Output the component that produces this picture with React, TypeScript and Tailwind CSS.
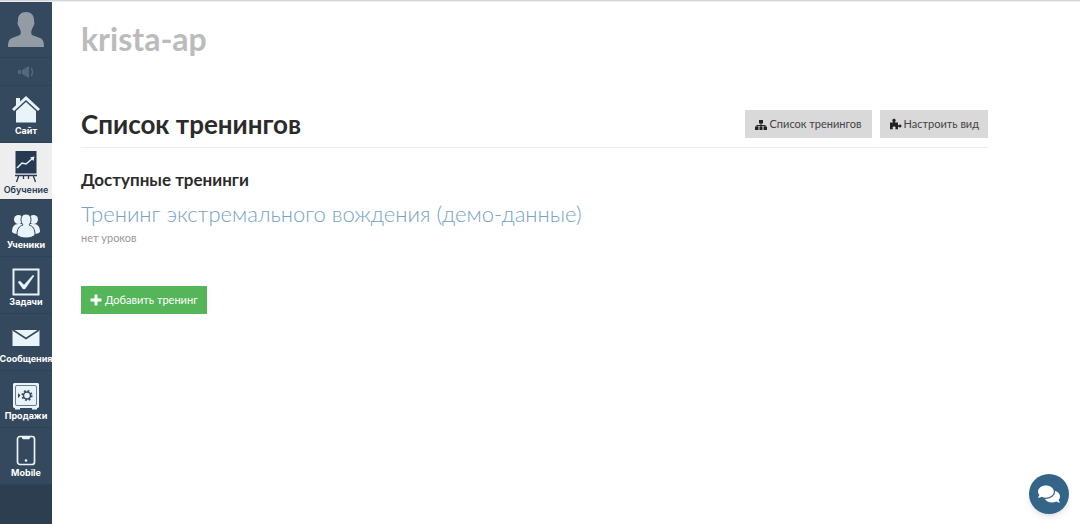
import type { ReactNode } from "react";
import { FaComments } from "react-icons/fa";

function HomeIcon() {
  return (
    <svg viewBox="0 0 30 30" className="size-[30px]" fill="#e9f3fa" aria-hidden="true">
      <path d="M5 3h4v5l-4 4z" />
      <path d="M15 1 29 14l-2 2L15 5 3 16l-2-2z" />
      <path d="M15 7 25 16v11.500H5V16z" />
    </svg>
  );
}

function BoardIcon() {
  return (
    <svg viewBox="0 0 30 34" className="h-[34px] w-[30px]" fill="none" aria-hidden="true">
      <path d="M4.500 1h21v22.500h-21z" fill="#263b52" />
      <path d="M4 25.500h22M8 25l-2.500 7M22 25l2.500 7M12.500 25v4M17.500 25v4" stroke="#263b52" strokeWidth="1.300" />
      <path d="m6 18 5-5 4 1 7-6" stroke="#e9f3fa" strokeWidth="1.500" />
      <path d="m19 7.500 4.500-1-1 4.500z" fill="#e9f3fa" />
    </svg>
  );
}

function PeopleIcon() {
  return (
    <svg viewBox="0 0 30 26" className="h-[26px] w-[30px]" fill="#e9f3fa" aria-hidden="true">
      <circle cx="7.500" cy="6.500" r="4.500" />
      <circle cx="22.500" cy="6.500" r="4.500" />
      <path d="M1 19c0-5 2-8 6-8h16c4 0 6 3 6 8-2 2-5 2-7 2H8c-2 0-5 0-7-2z" />
      <path
        d="M15 1c3 0 5 2 5 5.500 0 2.500-1 4.500-2 5.500 4 1 6 4 6 10-2 2-5 3-9 3s-7-1-9-3c0-6 2-9 6-10-1-1-2-3-2-5.500C10 3 12 1 15 1z"
        stroke="#34495e"
      />
    </svg>
  );
}

function TaskIcon() {
  return (
    <svg viewBox="0 0 28 28" className="size-7" fill="none" stroke="#e9f3fa" aria-hidden="true">
      <path d="M1.500 1.500h25v25h-25z" strokeWidth="2" />
      <path d="m6 14 2-1 4 4 9-10 1 1-9 13h-2z" fill="#e9f3fa" strokeWidth=".3" />
    </svg>
  );
}

function MailIcon() {
  return (
    <svg viewBox="0 0 28 18" className="h-[18px] w-7" aria-hidden="true">
      <path d="M.5 1h27v16H.5z" fill="#e9f3fa" />
      <path d="m1 1 13 8.500L27 1" fill="none" stroke="#34495e" strokeWidth="1.500" />
    </svg>
  );
}

function SafeIcon() {
  return (
    <svg viewBox="0 0 28 28" className="size-7" aria-hidden="true">
      <path d="M2 1h24l1 1v23l-1 1h-1v1.500h-5V26H8v1.500H3V26H2l-1-1V2z" fill="#e9f3fa" />
      <rect x="3.500" y="3.500" width="21" height="20" rx="1.500" fill="none" stroke="#34495e" strokeWidth=".7" />
      <circle cx="15" cy="13.500" r="3.500" fill="none" stroke="#34495e" strokeWidth="1.500" />
      <circle cx="15" cy="13.500" r="4.700" fill="none" stroke="#34495e" strokeWidth="1.800" strokeDasharray="1.800 1.890" />
      <path d="M6 11v5l2.500-2.500z" fill="#34495e" />
    </svg>
  );
}

function PhoneIcon() {
  return (
    <svg viewBox="0 0 20 32" className="h-8 w-5" fill="none" stroke="#e9f3fa" aria-hidden="true">
      <rect x="1.500" y="1.500" width="17" height="28" rx="2.500" strokeWidth="1.700" />
      <path d="M6 2h8v1l-1 1H7L6 3z" fill="#e9f3fa" strokeWidth=".5" />
      <circle cx="10" cy="25.500" r="1.300" fill="#e9f3fa" stroke="none" />
    </svg>
  );
}

function SitemapIcon() {
  return (
    <svg viewBox="0 0 12 11" className="h-[11px] w-3" fill="#222222" aria-hidden="true">
      <path d="M4 1h4v3.500H6.500V6h4v1.500H12V11H8.500V7.500h1V7h-3v.5h1V11h-3V7.500h1V7h-3v.5h1V11H0V7.500h1.500V6h4V4.500H4z" />
    </svg>
  );
}

function PuzzleIcon() {
  return (
    <svg viewBox="0 0 13 12" className="h-3 w-[13px]" fill="#222222" aria-hidden="true">
      <path d="M1 4.500h3.200C4 3.800 3.300 3.200 3.300 2.300 3.300 1.300 4.100.7 5 .7s1.700.6 1.700 1.600c0 .9-.7 1.500-.9 2.200H9v2.700c.8 0 1.200-.8 2-.8s1.500.6 1.500 1.500S11.900 9.400 11 9.400s-1.200-.7-2-.7v2.600H6.300c-.2-.6.3-1 .3-1.600 0-.8-.7-1.300-1.500-1.300s-1.500.5-1.500 1.300c0 .6.5 1 .3 1.600H1z" />
    </svg>
  );
}

function PlusIcon() {
  return (
    <svg viewBox="0 0 12 12" className="size-3" fill="#ffffff" aria-hidden="true">
      <path d="M4.500.5h3v4h4v3h-4v4h-3v-4h-4v-3h4z" />
    </svg>
  );
}

type Item = { label: string; icon: ReactNode; active?: boolean };

const items: Item[] = [
  { label: "Сайт", icon: <HomeIcon /> },
  { label: "Обучение", icon: <BoardIcon />, active: true },
  { label: "Ученики", icon: <PeopleIcon /> },
  { label: "Задачи", icon: <TaskIcon /> },
  { label: "Сообщения", icon: <MailIcon /> },
  { label: "Продажи", icon: <SafeIcon /> },
  { label: "Mobile", icon: <PhoneIcon /> },
];

function Sidebar() {
  return (
    <nav className="flex w-[52px] shrink-0 flex-col bg-[#2c3e50]">
      <a href="#profile" aria-label="Профиль" className="flex h-14 items-center justify-center border-b border-[#2d4257] bg-[#34495e]">
        <svg viewBox="0 0 36 36" className="size-9" fill="#939ca5" aria-hidden="true">
          <path d="M18 0c5 0 8 3 8 8 0 2 1 2 0 5l-2 4c-1 2-1 5 0 6l8 3c3 1 4 4 4 9H0c0-5 1-8 4-9l8-3c1-1 1-4 0-6l-2-4c-1-3 0-3 0-5 0-5 3-8 8-8z" />
        </svg>
      </a>
      <a href="#news" aria-label="Новости" className="flex h-7 items-center justify-center border-b border-[#2d4257] bg-[#34495e]">
        <svg viewBox="0 0 18 14" className="h-3.5 w-[18px]" fill="#52687d" aria-hidden="true">
          <path d="M1 5h3v4H1zM5 5l7-4v12L5 9z" />
          <path d="M14 3c2 2 2 6 0 8" fill="none" stroke="#52687d" strokeWidth="1.500" />
        </svg>
      </a>
      {items.map(({ label, icon, active }) => (
        <a
          key={label}
          href={`#${label}`}
          className={
            active
              ? "flex h-[57px] flex-col items-center justify-end border-b border-[#2d4257] bg-[#eeeeee] pb-[3px] text-[9px] leading-3 font-semibold text-[#263b52]"
              : "flex h-[57px] flex-col items-center justify-end border-b border-[#2d4257] bg-[#34495e] pb-[5px] text-[9px] leading-3 font-bold text-white"
          }
        >
          <span className={label === "Сообщения" ? "mb-1.5" : ""}>{icon}</span>
          <span>{label}</span>
        </a>
      ))}
    </nav>
  );
}

export default function App() {
  return (
    <div className="flex min-h-screen flex-col bg-white font-['Inter',sans-serif] text-[#2b2b2b]">
      <div className="h-0.5 shrink-0 border-t border-[#d5d5d5] bg-[#eeeeee]" />
      <div className="flex grow">
        <Sidebar />
        <main className="grow pr-[92px] pl-[29px] font-['Lato',sans-serif]">
          <p className="pt-[17px] text-[32px] leading-10 font-bold text-[#bbbbbb]">krista-ap</p>
          <header className="mt-[45px] flex items-center justify-between border-b border-[#eeeeee] pb-[3px]">
            <h1 className="text-[26px] leading-10 font-bold">Список тренингов</h1>
            <div className="flex gap-2 text-[11px] text-[#444444]">
              <button type="button" className="flex h-7 items-center gap-[3px] bg-[#d9d9d9] px-2.5">
                <SitemapIcon />
                Список тренингов
              </button>
              <button type="button" className="flex h-7 items-center gap-0.5 bg-[#d9d9d9] px-[9px]">
                <PuzzleIcon />
                Настроить вид
              </button>
            </div>
          </header>
          <h2 className="mt-5 text-[17px] leading-6 font-bold">Доступные тренинги</h2>
          <a href="#training" className="mt-1.5 block text-[22px] leading-8 font-light text-[#76a3c6]">
            Тренинг экстремального вождения (демо-данные)
          </a>
          <p className="text-[11px] leading-4 text-[#999999]">нет уроков</p>
          <button type="button" className="mt-10 flex h-7 items-center gap-[3px] bg-[#55b559] px-[9px] text-[11px] text-white">
            <PlusIcon />
            Добавить тренинг
          </button>
        </main>
      </div>
      <button
        type="button"
        aria-label="Открыть чат"
        className="fixed right-[11px] bottom-2.5 flex size-10 items-center justify-center rounded-full bg-[#356489] text-white shadow-md"
      >
        <FaComments className="size-[22px]" aria-hidden="true" />
      </button>
    </div>
  );
}
